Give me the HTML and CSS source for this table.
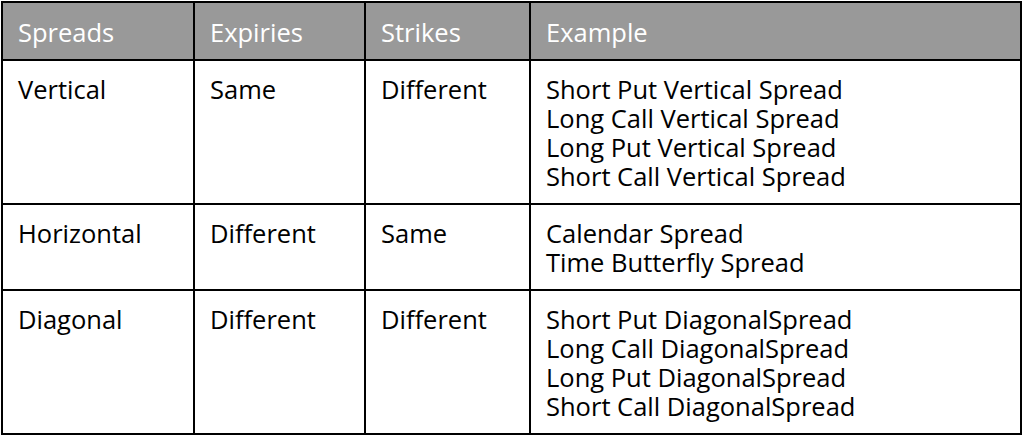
FILE: index.html
```html
<!DOCTYPE html>
<html lang="en">
<head>
<meta charset="utf-8">
<title>Spreads</title>
<link rel="stylesheet" href="styles.css">
</head>
<body>
<div class="page">
  <div class="grid" role="table">
    <div class="cell head" role="columnheader">Spreads</div>
    <div class="cell head" role="columnheader">Expiries</div>
    <div class="cell head" role="columnheader">Strikes</div>
    <div class="cell head" role="columnheader">Example</div>

    <div class="cell" role="cell">Vertical</div>
    <div class="cell" role="cell">Same</div>
    <div class="cell" role="cell">Different</div>
    <div class="cell" role="cell">Short Put Vertical Spread<br>Long Call Vertical Spread<br>Long Put Vertical Spread<br>Short Call Vertical Spread</div>

    <div class="cell" role="cell">Horizontal</div>
    <div class="cell" role="cell">Different</div>
    <div class="cell" role="cell">Same</div>
    <div class="cell" role="cell">Calendar Spread<br>Time Butterfly Spread</div>

    <div class="cell" role="cell">Diagonal</div>
    <div class="cell" role="cell">Different</div>
    <div class="cell" role="cell">Different</div>
    <div class="cell" role="cell">Short Put DiagonalSpread<br>Long Call DiagonalSpread<br>Long Put DiagonalSpread<br>Short Call DiagonalSpread</div>
  </div>
</div>
</body>
</html>
```

FILE: styles.css
```css
* { box-sizing: border-box; }
html, body { margin: 0; padding: 0; background: #fff; }
.page { padding: 1px; }
.grid {
  display: grid;
  grid-template-columns: 192px 171px 165px 491px;
  border-left: 2px solid #000;
  border-top: 2px solid #000;
  width: 1021px;
  font-family: "Open Sans", "Liberation Sans", sans-serif;
  font-size: 25.5px;
  line-height: 29px;
  color: #000;
}
.cell {
  border-right: 2px solid #000;
  border-bottom: 2px solid #000;
  padding: 14px 8px 12px 15px;
  white-space: nowrap;
}
.head {
  background: #999999;
  color: #fff;
  padding-top: 15px;
  padding-bottom: 12px;
}
```
